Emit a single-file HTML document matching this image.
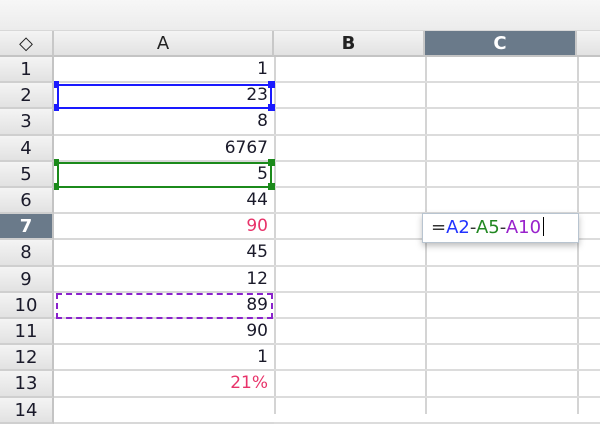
<!DOCTYPE html>
<html><head><style>
body{margin:0;width:600px;height:414px;overflow:hidden;background:#fff;font-family:"DejaVu Sans","Liberation Sans",sans-serif;position:relative}
div{position:absolute;box-sizing:border-box}
.top{left:0;top:0;width:600px;height:31px;background:linear-gradient(#f7f7f7,#ececec);border-bottom:1px solid #d8d8d8}
.hd{top:31px;height:26px;background:linear-gradient(#f4f4f4,#e2e2e2);border-right:2px solid #c8c8c8;border-bottom:2px solid #c4c4c4;text-align:center;font-size:18px;line-height:25px;color:#222}
.rh{left:0;width:54px;background:linear-gradient(#f4f4f4,#e2e2e2);border-right:2px solid #c4c4c4;border-bottom:2px solid #cfcfcf;text-align:center;font-size:18px;color:#1a1a2a}
.c{left:54px;width:220px;text-align:right;padding-right:6px;font-size:17px;color:#1a1a2a;border-bottom:2px solid #d8d8d8}
.vl{top:57px;width:2px;height:357px;background:#d4d4d4}
.hl{left:274px;width:326px;height:2px;background:#dcdcdc}
.h{width:7px;height:7px}
</style></head><body>
<div class="top"></div>
<div class="hd" style="left:0;width:54px;font-size:18px;font-weight:bold">&#9671;</div>
<div class="hd" style="left:54px;width:220px">A</div>
<div class="hd" style="left:274px;width:151px;font-weight:bold">B</div>
<div class="hd" style="left:425px;width:152px;background:#6a7a8a;color:#fff;font-weight:bold">C</div>
<div class="hd" style="left:577px;width:30px"></div>
<div class="vl" style="left:274px"></div>
<div class="vl" style="left:425px"></div>
<div class="vl" style="left:577px"></div>
<div id="rows"></div>
<script>
var v=["1","23","8","6767","5","44","90","45","12","89","90","1","21%",""];
var h="";
for(var i=0;i<14;i++){var y=57+i*26.2;
var sel=i==6;
h+='<div class="rh" style="top:'+y+'px;height:26.2px;line-height:25px;'+(sel?'background:#6a7a8a;color:#fff;font-weight:bold;':'')+'">'+(i+1)+'</div>';
h+='<div class="c" style="top:'+y+'px;height:26.2px;line-height:25px;'+((i==6||i==12)?'color:#e8336a;':'')+'">'+v[i]+'</div>';
h+='<div class="hl" style="top:'+(y+24.2)+'px"></div>';}
document.getElementById('rows').innerHTML=h;
</script>
<div style="left:57px;top:84px;width:215px;height:25px;border:2px solid #1a1aff"></div>
<div class="h" style="left:54px;top:81px;background:#1a1aff;width:5px"></div>
<div class="h" style="left:54px;top:104px;background:#1a1aff;width:5px"></div>
<div class="h" style="left:268px;top:81px;background:#1a1aff"></div>
<div class="h" style="left:268px;top:104px;background:#1a1aff"></div>
<div style="left:57px;top:162px;width:215px;height:26px;border:2px solid #1b8a1b"></div>
<div class="h" style="left:54px;top:159px;background:#1b8a1b;width:5px"></div>
<div class="h" style="left:54px;top:183px;background:#1b8a1b;width:5px"></div>
<div class="h" style="left:268px;top:159px;background:#1b8a1b"></div>
<div class="h" style="left:268px;top:183px;background:#1b8a1b"></div>
<div style="left:56px;top:293px;width:217px;height:26px;border:2px dashed #8a22cc"></div>
<div style="left:422px;top:213px;width:157px;height:30px;background:#fff;border:1px solid #b8c4d0;box-shadow:0 3px 6px rgba(0,0,0,.25);font-size:18px;line-height:28px;padding-left:8px;color:#333">=<span style="color:#2233ff">A2</span>-<span style="color:#228822">A5</span>-<span style="color:#9922cc">A10</span><span style="display:inline-block;width:1px;height:19px;background:#000;vertical-align:-3px;margin-left:2px"></span></div>
</body></html>
